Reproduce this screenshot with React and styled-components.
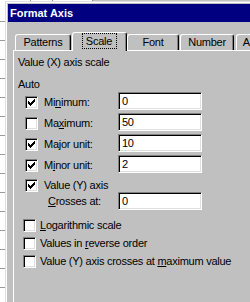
import React from 'react';
import styled, { createGlobalStyle } from 'styled-components';

const GlobalStyle = createGlobalStyle`
  html, body {
    margin: 0;
    padding: 0;
  }
  body {
    background: #fff;
    font-family: "Liberation Sans", Arial, sans-serif;
    font-size: 11px;
  }
`;

// spreadsheet peeking out behind the dialog
const Sheet = styled.div`
  width: 250px;
  height: 302px;
  overflow: hidden;
  box-sizing: border-box;
  padding: 1px 0 0 5px;
  background-color: #fff;
  background-image:
    linear-gradient(#c0c0c0, #c0c0c0),
    linear-gradient(#8a8a8a, #8a8a8a),
    linear-gradient(#8a8a8a, #8a8a8a),
    linear-gradient(#8a8a8a, #8a8a8a),
    repeating-linear-gradient(to bottom, transparent 0 18px, #9a9a9a 18px 19px);
  background-size: 157px 4px, 1px 4px, 1px 4px, 1px 4px, 5px 100%;
  background-position: 93px 0, 30px 0, 52px 0, 92px 0, 0 3px;
  background-repeat: no-repeat;
`;

const Dialog = styled.div`
  width: 280px;
  height: 330px;
  flex-shrink: 0;
  box-sizing: border-box;
  background: #c0c0c0;
  border-top: 1px solid #dfdfdf;
  border-left: 1px solid #dfdfdf;
  box-shadow: inset 1px 1px #fff;
  padding: 2px 0 0 2px;
  display: flex;
  flex-direction: column;
  color: #000;
  letter-spacing: -0.25px;
`;

const TitleBar = styled.div`
  height: 18px;
  display: flex;
  align-items: center;
  padding-left: 2px;
  background: #000080;
  color: #fff;
  font-weight: bold;
  letter-spacing: 0;
`;

const Body = styled.div`
  flex: 1;
  display: flex;
  flex-direction: column;
  padding: 10px 0 0 5px;
`;

const TabRow = styled.div`
  height: 18px;
  display: flex;
  align-items: flex-end;
  padding-left: 2px;
  border-bottom: 1px solid #fff;
`;

const Tab = styled.div`
  width: ${p => p.w}px;
  height: ${p => (p.active ? 19 : 16)}px;
  margin-left: ${p => p.gap || 0}px;
  margin-bottom: ${p => (p.active ? -1 : 0)}px;
  box-sizing: border-box;
  flex-shrink: 0;
  display: flex;
  align-items: center;
  justify-content: center;
  padding-bottom: ${p => (p.active ? 3 : 1)}px;
  background: #c0c0c0;
  border-top: 1px solid #fff;
  border-left: 1px solid #fff;
  border-right: 1px solid #000;
  border-radius: 3px 3px 0 0;
  box-shadow: inset -1px 0 #808080;
`;

const Focus = styled.span`
  outline: 1px dotted #000;
  padding: 1px 4px 1px 3px;
`;

const Panel = styled.div`
  flex: 1;
  border-left: 1px solid #fff;
  padding: 5px 0 0 4px;
  display: flex;
  flex-direction: column;
`;

const Line = styled.div`
  height: 13px;
  line-height: 13px;
  margin-top: ${p => p.top || 0}px;
`;

const FieldGrid = styled.div`
  margin-top: 1px;
  padding-left: ${p => p.indent}px;
  display: grid;
  grid-template-columns: ${p => p.label}px 84px;
  grid-auto-rows: ${p => p.row}px;
  align-items: start;
`;

const Labelled = styled.div`
  display: flex;
  align-items: center;
  gap: ${p => p.gap}px;
  height: 13px;
  line-height: 13px;
  margin-top: ${p => p.top || 0}px;
  white-space: nowrap;
`;

const Box = styled.span`
  width: 13px;
  height: 13px;
  flex-shrink: 0;
  box-sizing: border-box;
  background: #fff;
  border-top: 1px solid #808080;
  border-left: 1px solid #808080;
  border-right: 1px solid #fff;
  border-bottom: 1px solid #fff;
  box-shadow: inset 1px 1px #000, inset -1px -1px #dfdfdf;
  display: flex;
  align-items: center;
  justify-content: center;
`;

const Field = styled.div`
  width: 84px;
  height: 18px;
  box-sizing: border-box;
  background: #fff;
  border-top: 1px solid #808080;
  border-left: 1px solid #808080;
  border-right: 1px solid #fff;
  border-bottom: 1px solid #fff;
  box-shadow: inset 1px 1px #000, inset -1px -1px #dfdfdf;
  padding: 0 3px;
  line-height: 16px;
`;

const Options = styled.div`
  margin-top: 8px;
  padding-left: 5px;
  display: flex;
  flex-direction: column;
  gap: 5px;
`;

const Check = ({ on }) => (
  <Box>
    {on && (
      <svg width="7" height="7" viewBox="0 0 7 7" shapeRendering="crispEdges">
        <path d="M0 2h1v1h1v1h1v-1h1v-1h1v-1h1v-1h1v3h-1v1h-1v1h-1v1h-1v1h-1v-1h-1v-1h-1z" fill="#000" />
      </svg>
    )}
  </Box>
);

const fields = [
  { on: true, label: <>Mi<u>n</u>imum:</>, value: '0' },
  { on: false, label: <>Ma<u>x</u>imum:</>, value: '50' },
  { on: true, label: <>Ma<u>j</u>or unit:</>, value: '10' },
  { on: true, label: <>M<u>i</u>nor unit:</>, value: '2' },
];

const options = [
  <><u>L</u>ogarithmic scale</>,
  <>Values in <u>r</u>everse order</>,
  <>Value (Y) axis crosses at <u>m</u>aximum value</>,
];

const tabs = [
  { name: 'Patterns', w: 56 },
  { name: 'Scale', w: 55, gap: 1, active: true },
  { name: 'Font', w: 52 },
  { name: 'Number', w: 54, gap: 1 },
  { name: 'Alignment', w: 60, gap: 2 },
];

const App = () => (
  <Sheet>
    <GlobalStyle />
    <Dialog>
      <TitleBar>Format Axis</TitleBar>
      <Body>
        <TabRow>
          {tabs.map(t => (
            <Tab key={t.name} w={t.w} gap={t.gap} active={t.active}>
              {t.active ? <Focus>{t.name}</Focus> : t.name}
            </Tab>
          ))}
        </TabRow>
        <Panel>
          <Line>Value (X) axis scale</Line>
          <Line top={9}>Auto</Line>
          <FieldGrid indent={7} label={93} row={21}>
            {fields.map((f, i) => (
              <React.Fragment key={i}>
                <Labelled gap={6} top={4}>
                  <Check on={f.on} />
                  <span>{f.label}</span>
                </Labelled>
                <Field>{f.value}</Field>
              </React.Fragment>
            ))}
          </FieldGrid>
          <FieldGrid indent={7} label={93} row={14}>
            <Labelled gap={6} top={2}>
              <Check on />
              <span>Value (Y) axis</span>
            </Labelled>
          </FieldGrid>
          <FieldGrid indent={30} label={70} row={19}>
            <Labelled gap={0} top={3}>
              <span><u>C</u>rosses at:</span>
            </Labelled>
            <Field>0</Field>
          </FieldGrid>
          <Options>
            {options.map((o, i) => (
              <Labelled key={i} gap={4}>
                <Check />
                <span>{o}</span>
              </Labelled>
            ))}
          </Options>
        </Panel>
      </Body>
    </Dialog>
  </Sheet>
);

export default App;
